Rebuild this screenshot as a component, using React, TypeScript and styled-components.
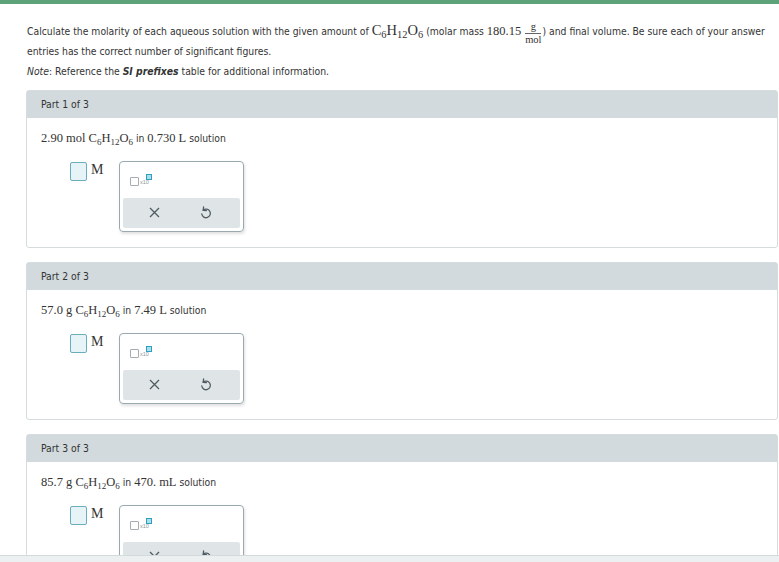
import React from "react";
import styled, { createGlobalStyle } from "styled-components";

const GlobalStyle = createGlobalStyle`
  html, body { margin: 0; padding: 0; background: #ffffff; }
  body {
    font-family: "DejaVu Sans Condensed", "DejaVu Sans", sans-serif;
    font-stretch: condensed;
    font-size: 10.3px;
    color: #333333;
  }
`;

const TopBar = styled.div`
  height: 4px;
  background: #5ea27a;
`;

const Page = styled.main`
  padding: 0 1px 40px 26px;
`;

const Intro = styled.div`
  padding: 16px 0 0 1px;
  line-height: 20.5px;
`;

const IntroLine = styled.div`
  white-space: nowrap;
  height: 20.5px;
`;

const Math = styled.span<{ $size?: number }>`
  font-family: "Liberation Serif", "Times New Roman", serif;
  font-size: ${(p) => p.$size ?? 13}px;
  color: #333;
`;

const Sub = styled.sub`
  font-size: 72%;
  vertical-align: -0.3em;
  line-height: 0;
`;

const Frac = styled.span`
  display: inline-block;
  vertical-align: -8px;
  text-align: center;
  font-family: "Liberation Serif", "Times New Roman", serif;
  font-size: 10.5px;
  line-height: 9px;
  margin: 0 1px 0 4px;
`;

const FracNum = styled.span`
  display: block;
  border-bottom: 1px solid #666;
  padding: 0 1px 2px;
`;

const FracDen = styled.span`
  display: block;
  padding-top: 1px;
`;

const Panels = styled.div`
  margin-top: 8px;
  display: flex;
  flex-direction: column;
  gap: 14px;
`;

const Panel = styled.section`
  border: 1px solid #d5dcde;
  border-radius: 3px;
  background: #fff;
`;

const PanelHeader = styled.header`
  height: 27px;
  background: #d2dadd;
  display: flex;
  align-items: center;
  padding-left: 14px;
`;

const PanelBody = styled.div`
  padding: 10px 15px 15px 14px;
`;

const Problem = styled.div`
  line-height: 20px;
  white-space: nowrap;
`;

const AnswerRow = styled.div`
  margin-top: 13px;
  display: flex;
  align-items: flex-start;
`;

const InputGroup = styled.div`
  width: 49px;
  margin-left: 29px;
  display: flex;
  align-items: flex-start;
  padding-top: 1px;
`;

const InputBox = styled.div`
  width: 15px;
  height: 17px;
  border: 1px solid #6aaebd;
  border-radius: 2px;
  background: #e6f3f7;
`;

const Unit = styled.span`
  font-family: "Liberation Serif", "Times New Roman", serif;
  font-size: 14px;
  margin-left: 4px;
  line-height: 16px;
`;

const Toolbox = styled.div`
  width: 117px;
  height: 66px;
  border: 1px solid #98aab0;
  border-radius: 4px;
  box-shadow: 1px 2px 3px rgba(0, 0, 0, 0.12);
  display: flex;
  flex-direction: column;
  padding: 0 3px 3px;
  box-sizing: content-box;
`;

const ToolTop = styled.div`
  height: 36px;
  flex: none;
  position: relative;
`;

const SciIcon = styled.div`
  position: absolute;
  left: 7px;
  top: 12px;
  width: 24px;
  height: 13px;
`;

const SciBase = styled.span`
  position: absolute;
  left: 0;
  top: 3px;
  width: 7px;
  height: 7px;
  border: 1.5px solid #a3adb2;
  border-radius: 1px;
`;

const SciText = styled.span`
  position: absolute;
  left: 10px;
  top: 5px;
  font-family: "Liberation Sans", sans-serif;
  font-size: 5.5px;
  color: #8b979c;
`;

const SciExp = styled.span`
  position: absolute;
  left: 16px;
  top: 0px;
  width: 4px;
  height: 4px;
  border: 1.3px solid #2e9fbf;
  background: #a9dfec;
`;

const ButtonBar = styled.div`
  height: 30px;
  flex: none;
  background: #dfe5e7;
  border-radius: 2px;
  display: flex;
  align-items: center;
  justify-content: space-around;
  padding: 0 9px 0 6px;
`;

const IconButton = styled.button`
  border: none;
  background: transparent;
  padding: 0;
  width: 20px;
  height: 20px;
  display: flex;
  align-items: center;
  justify-content: center;
  color: #4f5b61;
`;

const Footer = styled.div`
  position: fixed;
  left: 0;
  right: 0;
  bottom: 0;
  height: 6px;
  border-top: 1px solid #d3dadc;
  background: #edf0f1;
`;

const Glucose = ({ size }: { size?: number }) => (
  <Math $size={size}>
    C<Sub>6</Sub>H<Sub>12</Sub>O<Sub>6</Sub>
  </Math>
);

const Clear = () => (
  <svg width="11" height="11" viewBox="0 0 11 11" fill="none" stroke="currentColor" strokeWidth="1.3">
    <path d="M1 1 L10 10 M10 1 L1 10" />
  </svg>
);

const Undo = () => (
  <svg width="12" height="13" viewBox="0 0 12 13" fill="none" stroke="currentColor" strokeWidth="1.3" strokeLinecap="round" strokeLinejoin="round">
    <path d="M3.2 4.2 A4.3 4.3 0 1 1 1.8 8" />
    <path d="M3.6 1 L3.2 4.3 L6.4 4.6" />
  </svg>
);

const parts = [
  {
    n: 1,
    problem: (
      <>
        <Math $size={12.5}>2.90 mol </Math>
        <Glucose size={12.5} /> in <Math $size={12.5}>0.730 L</Math> solution
      </>
    ),
  },
  {
    n: 2,
    problem: (
      <>
        <Math $size={12.5}>57.0 g </Math>
        <Glucose size={12.5} /> in <Math $size={12.5}>7.49 L</Math> solution
      </>
    ),
  },
  {
    n: 3,
    problem: (
      <>
        <Math $size={12.5}>85.7 g </Math>
        <Glucose size={12.5} /> in <Math $size={12.5}>470. mL</Math> solution
      </>
    ),
  },
];

export default function App() {
  return (
    <>
      <GlobalStyle />
      <TopBar />
      <Page>
        <Intro>
          <IntroLine>
            Calculate the molarity of each aqueous solution with the given amount of <Glucose size={14.5} /> (molar mass{" "}
            <Math $size={12.5}>180.15</Math>
            <Frac>
              <FracNum>g</FracNum>
              <FracDen>mol</FracDen>
            </Frac>
            ) and final volume. Be sure each of your answer
          </IntroLine>
          <IntroLine>entries has the correct number of significant figures.</IntroLine>
          <IntroLine>
            <em>Note</em>: Reference the{" "}
            <strong>
              <em>SI prefixes</em>
            </strong>{" "}
            table for additional information.
          </IntroLine>
        </Intro>
        <Panels>
          {parts.map((p) => (
            <Panel key={p.n}>
              <PanelHeader>Part {p.n} of 3</PanelHeader>
              <PanelBody>
                <Problem>{p.problem}</Problem>
                <AnswerRow>
                  <InputGroup>
                    <InputBox />
                    <Unit>M</Unit>
                  </InputGroup>
                  <Toolbox>
                    <ToolTop>
                      <SciIcon>
                        <SciBase />
                        <SciText>x10</SciText>
                        <SciExp />
                      </SciIcon>
                    </ToolTop>
                    <ButtonBar>
                      <IconButton aria-label="clear">
                        <Clear />
                      </IconButton>
                      <IconButton aria-label="undo">
                        <Undo />
                      </IconButton>
                    </ButtonBar>
                  </Toolbox>
                </AnswerRow>
              </PanelBody>
            </Panel>
          ))}
        </Panels>
      </Page>
      <Footer />
    </>
  );
}
